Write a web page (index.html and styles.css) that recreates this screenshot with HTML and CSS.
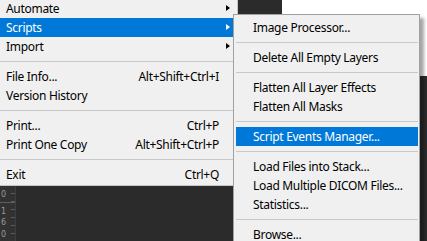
FILE: index.html
```html
<!DOCTYPE html>
<html>
<head>
<meta charset="utf-8">
<link rel="stylesheet" href="styles.css">
</head>
<body>
<div class="app">
  <div class="ruler">
    <div class="ruler-nums">
      <span class="num">0</span>
      <div class="ruler-major"></div>
      <span class="num">1</span>
      <span class="num">6</span>
      <span class="num">0</span>
    </div>
  </div>
  <div class="workspace">
    <div class="doc"></div>
  </div>

  <div class="menu main-menu">
    <div class="item"><span class="label">Automate</span><span class="key"></span><span class="sub"><i class="arrow"></i></span></div>
    <div class="item active"><span class="label">Scripts</span><span class="key"></span><span class="sub"><i class="arrow"></i></span></div>
    <div class="item"><span class="label">Import</span><span class="key"></span><span class="sub"><i class="arrow"></i></span></div>
    <div class="sep"></div>
    <div class="item"><span class="label">File Info...</span><span class="key">Alt+Shift+Ctrl+I</span><span class="sub"></span></div>
    <div class="item"><span class="label">Version History</span><span class="key"></span><span class="sub"></span></div>
    <div class="sep"></div>
    <div class="item"><span class="label">Print...</span><span class="key">Ctrl+P</span><span class="sub"></span></div>
    <div class="item"><span class="label">Print One Copy</span><span class="key">Alt+Shift+Ctrl+P</span><span class="sub"></span></div>
    <div class="sep"></div>
    <div class="item"><span class="label">Exit</span><span class="key">Ctrl+Q</span><span class="sub"></span></div>
  </div>

  <div class="menu sub-menu">
    <div class="item">Image Processor...</div>
    <div class="sep"></div>
    <div class="item">Delete All Empty Layers</div>
    <div class="sep"></div>
    <div class="item">Flatten All Layer Effects</div>
    <div class="item">Flatten All Masks</div>
    <div class="sep"></div>
    <div class="item active">Script Events Manager...</div>
    <div class="sep"></div>
    <div class="item">Load Files into Stack...</div>
    <div class="item">Load Multiple DICOM Files...</div>
    <div class="item">Statistics...</div>
    <div class="sep"></div>
    <div class="item">Browse...</div>
  </div>
</div>
</body>
</html>
```

FILE: styles.css
```css
* { box-sizing: border-box; }
html, body {
  margin: 0;
  padding: 0;
  width: 427px;
  height: 241px;
  overflow: hidden;
  background: #282828;
}
.app {
  position: relative;
  display: flex;
  width: 427px;
  height: 241px;
  overflow: hidden;
  background: #282828;
  font-family: "Noto Sans", "Open Sans", sans-serif;
  font-size: 12px;
  letter-spacing: -0.3px;
}

/* vertical ruler */
.ruler {
  width: 16px;
  flex: none;
  background-color: #323232;
  background-image: repeating-linear-gradient(to bottom, transparent 0, transparent 7px, #5a5a5a 7px, #5a5a5a 8px);
  background-size: 4px 241px;
  background-position: 11px 2px;
  background-repeat: no-repeat;
  border-right: 1px solid #3e3e3e;
}
.ruler-nums {
  padding-top: 189px;
  display: flex;
  flex-direction: column;
  font-family: "DejaVu Sans", sans-serif;
  font-size: 8px;
  letter-spacing: 0;
  line-height: 11.5px;
  color: #9a9a9a;
}
.num {
  display: block;
  padding-left: 1px;
  width: 8px;
  background: #323232;
}
.ruler-major {
  height: 1px;
  margin: 1px 0 3px;
  background: #5e5e5e;
}

.workspace {
  flex: 1;
  background: #2b2b2b;
}
.doc {
  margin-left: 266px;
  height: 76px;
  background: #ffffff;
}

/* menus */
.menu {
  position: absolute;
  background: #f0f0f0;
  color: #000;
  line-height: 19px;
}
.main-menu {
  left: 0;
  top: -1px;
  width: 238px;
  padding-bottom: 1px;
  border-right: 1px solid #c6c6c6;
  border-bottom: 1px solid #c6c6c6;
}
.main-menu .item {
  display: grid;
  grid-template-columns: 1fr auto 18px;
  height: 19px;
  padding-left: 6px;
  white-space: nowrap;
}
.main-menu .key { text-align: right; }
.main-menu .sub {
  position: relative;
}
.arrow {
  position: absolute;
  left: 7px;
  top: 6px;
  width: 0;
  height: 0;
  border-left: 4px solid #000;
  border-top: 3.5px solid transparent;
  border-bottom: 3.5px solid transparent;
}
.item.active {
  background: #0078d7;
  color: #fff;
}
.item.active .arrow { border-left-color: #fff; }

.sep {
  height: 11px;
  padding-top: 5px;
}
.sep::before {
  content: "";
  display: block;
  height: 1px;
  background: #c9c9c9;
}

.sub-menu {
  left: 233px;
  top: 14px;
  width: 187px;
  height: 240px;
  padding: 3px 1px 0 2px;
  border: 1px solid #a0a0a0;
  box-shadow: 4px 4px 3px rgba(0, 0, 0, 0.35);
}
.sub-menu .item {
  height: 19px;
  padding-left: 17px;
  white-space: nowrap;
}
```
